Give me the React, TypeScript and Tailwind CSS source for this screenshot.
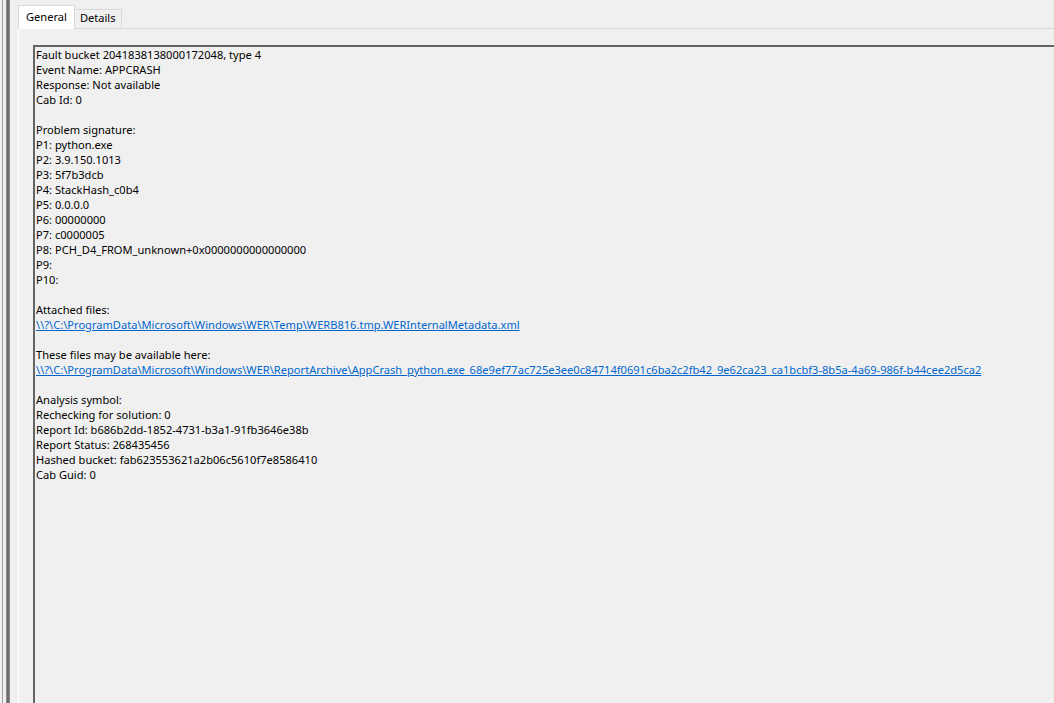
import React, { useState } from 'react';
import clsx from 'clsx';

const lines: { text: string; link?: boolean }[] = [
  { text: 'Fault bucket 2041838138000172048, type 4' },
  { text: 'Event Name: APPCRASH' },
  { text: 'Response: Not available' },
  { text: 'Cab Id: 0' },
  { text: '' },
  { text: 'Problem signature:' },
  { text: 'P1: python.exe' },
  { text: 'P2: 3.9.150.1013' },
  { text: 'P3: 5f7b3dcb' },
  { text: 'P4: StackHash_c0b4' },
  { text: 'P5: 0.0.0.0' },
  { text: 'P6: 00000000' },
  { text: 'P7: c0000005' },
  { text: 'P8: PCH_D4_FROM_unknown+0x0000000000000000' },
  { text: 'P9: ' },
  { text: 'P10: ' },
  { text: '' },
  { text: 'Attached files:' },
  { text: '\\\\?\\C:\\ProgramData\\Microsoft\\Windows\\WER\\Temp\\WERB816.tmp.WERInternalMetadata.xml', link: true },
  { text: '' },
  { text: 'These files may be available here:' },
  {
    text: '\\\\?\\C:\\ProgramData\\Microsoft\\Windows\\WER\\ReportArchive\\AppCrash_python.exe_68e9ef77ac725e3ee0c84714f0691c6ba2c2fb42_9e62ca23_ca1bcbf3-8b5a-4a69-986f-b44cee2d5ca2',
    link: true,
  },
  { text: '' },
  { text: 'Analysis symbol: ' },
  { text: 'Rechecking for solution: 0' },
  { text: 'Report Id: b686b2dd-1852-4731-b3a1-91fb3646e38b' },
  { text: 'Report Status: 268435456' },
  { text: 'Hashed bucket: fab623553621a2b06c5610f7e8586410' },
  { text: 'Cab Guid: 0' },
];

const tabs = ['General', 'Details'];

export default function App() {
  const [active, setActive] = useState('General');

  return (
    <div
      className="flex h-[703px] w-[1054px] overflow-hidden bg-[#f0f0f0] text-[11.1px] text-black"
      style={{ fontFamily: '"Noto Sans", "Liberation Sans", sans-serif' }}
    >
      {/* left splitter edge */}
      <div className="flex w-[18px] flex-none">
        <div className="ml-[2px] w-px bg-[#a0a0a0]" />
        <div className="ml-[3px] w-px bg-[#8a8a8a]" />
        <div className="w-[2px] bg-[#6d6d6d]" />
        <div className="w-px bg-[#8a8a8a]" />
      </div>

      <div className="flex min-w-0 flex-1 flex-col">
        {/* tab strip */}
        <div className="flex h-[28px] flex-none items-end pt-[5px]">
          {tabs.map((tab) => (
            <button
              key={tab}
              onClick={() => setActive(tab)}
              className={clsx(
                'border border-b-0 border-[#d9d9d9] leading-none',
                active === tab
                  ? 'relative z-10 -mb-px h-[24px] bg-white px-[7px] pt-[4px] pb-[6px]'
                  : 'h-[19px] border-l-0 bg-[#f0f0f0] px-[5px] pt-0 pb-[2px]'
              )}
            >
              {tab}
            </button>
          ))}
        </div>

        {/* tab page */}
        <div className="flex min-h-0 flex-1 flex-col border-t border-l border-t-[#d9d9d9] border-l-white pt-[16px] pl-[14px]">
          <div className="min-h-0 flex-1 border-t-2 border-l-2 border-[#646464] pt-0 pl-[1px] whitespace-nowrap">
            {lines.map((line, i) => (
              <div key={i} className="h-[15px] leading-[15px]">
                {line.link ? (
                  <a href="#" className="text-[#0066cc] underline">
                    {line.text}
                  </a>
                ) : (
                  line.text
                )}
              </div>
            ))}
          </div>
        </div>
      </div>
    </div>
  );
}
